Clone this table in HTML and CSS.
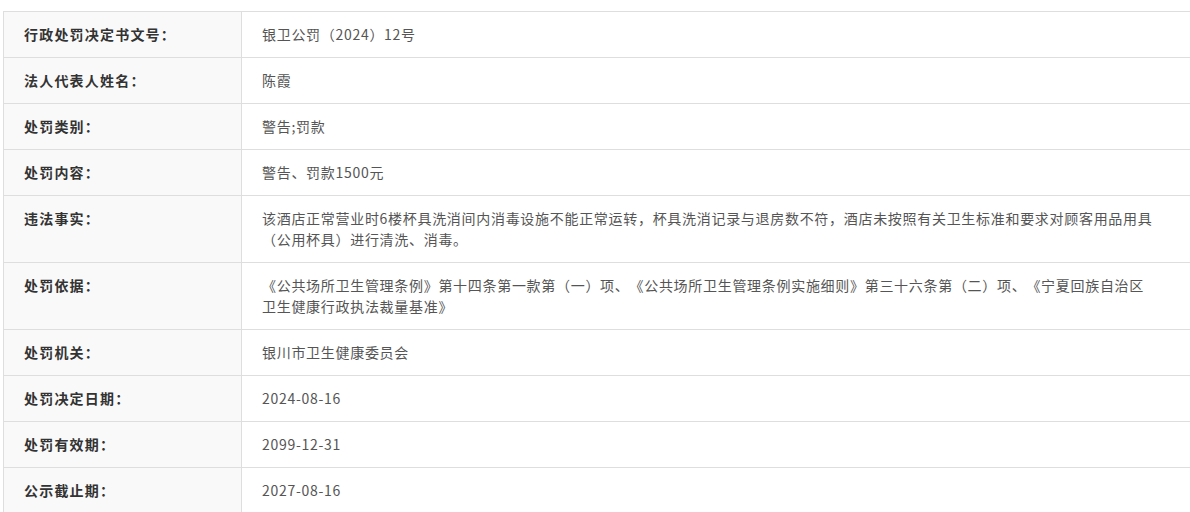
FILE: index.html
```html
<!DOCTYPE html>
<html lang="zh-CN">
<head>
    <meta charset="UTF-8">
    <meta name="viewport" content="width=device-width, initial-scale=1.0">
    <title>行政处罚信息</title>
    <link rel="stylesheet" href="styles.css">
</head>
<body>

    <div class="detail">
        <table class="detail-table">
            <tr>
                <th>行政处罚决定书文号：</th>
                <td>银卫公罚（2024）12号</td>
            </tr>
            <tr>
                <th>法人代表人姓名：</th>
                <td>陈霞</td>
            </tr>
            <tr>
                <th>处罚类别：</th>
                <td>警告;罚款</td>
            </tr>
            <tr>
                <th>处罚内容：</th>
                <td>警告、罚款1500元</td>
            </tr>
            <tr>
                <th>违法事实：</th>
                <td>该酒店正常营业时6楼杯具洗消间内消毒设施不能正常运转，杯具洗消记录与退房数不符，酒店未按照有关卫生标准和要求对顾客用品用具（公用杯具）进行清洗、消毒。</td>
            </tr>
            <tr>
                <th>处罚依据：</th>
                <td>《公共场所卫生管理条例》第十四条第一款第（一）项、《公共场所卫生管理条例实施细则》第三十六条第（二）项、《宁夏回族自治区卫生健康行政执法裁量基准》</td>
            </tr>
            <tr>
                <th>处罚机关：</th>
                <td>银川市卫生健康委员会</td>
            </tr>
            <tr>
                <th>处罚决定日期：</th>
                <td>2024-08-16</td>
            </tr>
            <tr>
                <th>处罚有效期：</th>
                <td>2099-12-31</td>
            </tr>
            <tr>
                <th>公示截止期：</th>
                <td>2027-08-16</td>
            </tr>
        </table>
    </div>

</body>
</html>
```

FILE: styles.css
```css
body {
    margin: 0;
    font-family: "Noto Sans CJK SC", "Noto Sans", sans-serif;
    background: #fff;
    overflow: hidden;
}

.detail {
    padding: 11px 0 0 3px;
}

.detail-table {
    width: 1220px;
    border-collapse: collapse;
    font-size: 14px;
    line-height: 21px;
    letter-spacing: 0.7px;
    text-spacing-trim: space-all;
}

.detail-table th,
.detail-table td {
    border: 1px solid #dedede;
    padding: 12px 20px;
    text-align: left;
    vertical-align: top;
}

.detail-table th {
    width: 197px;
    background: #f9f9f9;
    color: #333;
    font-weight: bold;
    letter-spacing: 1.2px;
}

.detail-table td {
    color: #555;
    padding-right: 66px;
}
```
